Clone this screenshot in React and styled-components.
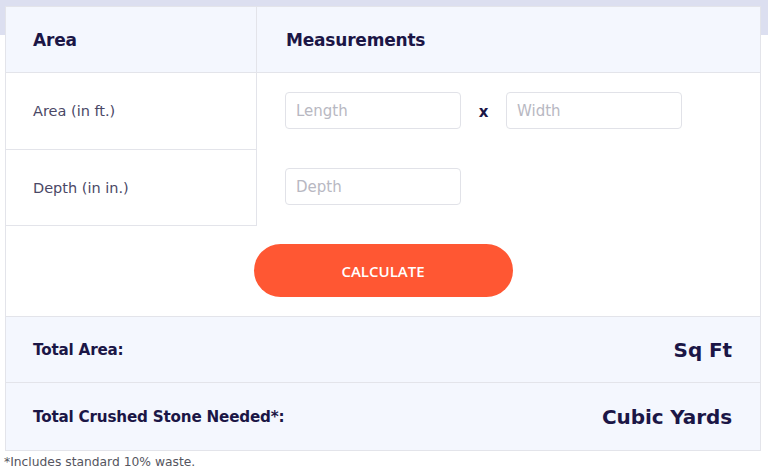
import React from "react";
import styled, { createGlobalStyle } from "styled-components";

const GlobalStyle = createGlobalStyle`
  html, body { margin: 0; padding: 0; background: #ffffff; }
  body { font-family: "DejaVu Sans", "Noto Sans", sans-serif; color: #1b1646; }
  * { box-sizing: border-box; }
`;

const Page = styled.div`
  width: 768px;
  height: 471px;
  background: linear-gradient(#dcdff0 0 35px, #ffffff 35px);
  padding: 6px 7px 0 5px;
  overflow: hidden;
`;

const Card = styled.div`
  border: 1px solid #e3e4ea;
  background: #ffffff;
`;

const Table = styled.div`
  display: grid;
  grid-template-columns: 251px 1fr;
`;

const HeadCell = styled.div`
  height: 66px;
  background: #f4f7fe;
  border-bottom: 1px solid #e3e4ea;
  border-right: ${(p) => (p.$divider ? "1px solid #e3e4ea" : "none")};
  display: flex;
  align-items: center;
  padding-left: ${(p) => p.$pad}px;
  font-weight: 700;
  font-size: 17px;
  letter-spacing: -0.2px;
  color: #1b1646;
`;

const LabelCell = styled.div`
  height: ${(p) => p.$h}px;
  border-right: 1px solid #e3e4ea;
  border-bottom: 1px solid #e3e4ea;
  display: flex;
  align-items: center;
  padding-left: 27px;
  font-size: 14.5px;
  color: #4a4866;
`;

const InputCell = styled.div`
  height: ${(p) => p.$h}px;
  display: flex;
  align-items: center;
  padding: 0 0 ${(p) => p.$lift}px 28px;
`;

const Field = styled.input`
  width: 176px;
  height: 37px;
  border: 1px solid #e1e2e8;
  border-radius: 4px;
  padding: 0 10px;
  font-family: inherit;
  font-size: 15px;
  color: #333;
  outline: none;
  &::placeholder { color: #b8b8c2; }
`;

const Times = styled.span`
  width: 45px;
  padding-top: 2px;
  text-align: center;
  font-weight: 700;
  font-size: 15px;
  color: #1b1646;
`;

const ButtonRow = styled.div`
  display: flex;
  justify-content: center;
  padding: 18px 0 19px;
`;

const CalcButton = styled.button`
  width: 259px;
  height: 53px;
  border: none;
  border-radius: 27px;
  background: #ff5733;
  color: #ffffff;
  font-family: "Open Sans", sans-serif;
  font-weight: 600;
  font-size: 15px;
  cursor: pointer;
`;

const ResultRow = styled.div`
  height: ${(p) => p.$h}px;
  background: #f4f7fe;
  border-top: 1px solid #e3e4ea;
  display: flex;
  align-items: center;
  justify-content: space-between;
  padding: 0 28px 0 27px;
`;

const ResultLabel = styled.span`
  font-weight: 700;
  font-size: 15.2px;
  letter-spacing: -0.2px;
  color: #1b1646;
`;

const ResultValue = styled.span`
  font-weight: 700;
  font-size: 20px;
  letter-spacing: -0.1px;
  color: #1b1646;
`;

const Footnote = styled.p`
  margin: 4px 0 0 -1px;
  font-size: 12.3px;
  color: #555560;
`;

export default function App() {
  return (
    <>
      <GlobalStyle />
      <Page>
        <Card>
          <Table>
            <HeadCell $divider $pad={27}>Area</HeadCell>
            <HeadCell $pad={29}>Measurements</HeadCell>
            <LabelCell $h={77}>Area (in ft.)</LabelCell>
            <InputCell $h={77} $lift={2}>
              <Field placeholder="Length" />
              <Times>x</Times>
              <Field placeholder="Width" />
            </InputCell>
            <LabelCell $h={76}>Depth (in in.)</LabelCell>
            <InputCell $h={76} $lift={3}>
              <Field placeholder="Depth" />
            </InputCell>
          </Table>
          <ButtonRow>
            <CalcButton>CALCULATE</CalcButton>
          </ButtonRow>
          <ResultRow $h={66}>
            <ResultLabel>Total Area:</ResultLabel>
            <ResultValue>Sq Ft</ResultValue>
          </ResultRow>
          <ResultRow $h={68}>
            <ResultLabel>Total Crushed Stone Needed*:</ResultLabel>
            <ResultValue>Cubic Yards</ResultValue>
          </ResultRow>
        </Card>
        <Footnote>*Includes standard 10% waste.</Footnote>
      </Page>
    </>
  );
}
